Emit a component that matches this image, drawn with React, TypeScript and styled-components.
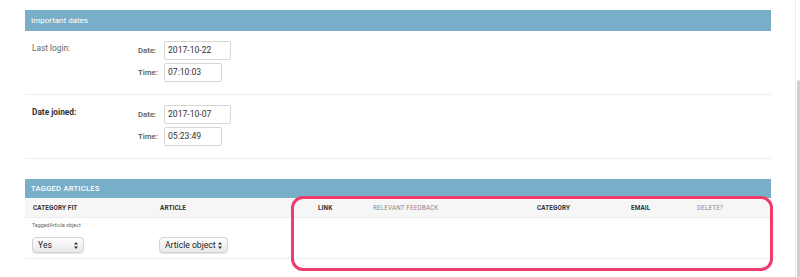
import React from "react";
import styled, { createGlobalStyle } from "styled-components";

const Global = createGlobalStyle`
  html, body { margin: 0; padding: 0; background: #fff; }
  body { font-family: Roboto, "Liberation Sans", Arial, sans-serif; color: #333; }
  * { box-sizing: border-box; }
`;

const Page = styled.div`
  display: flex;
  width: 800px;
  height: 277px;
  overflow: hidden;
`;

const Main = styled.main`
  width: 771px;
  padding: 10px 0 0 25px;
`;

const Scrollbar = styled.div`
  margin-left: 24px;
  width: 5px;
  border-left: 1px solid #ececec;
  display: flex;
  flex-direction: column;
`;

const Thumb = styled.div`
  margin-top: 80px;
  margin-left: 1px;
  width: 3px;
  flex: 1;
  background: #cfcfcf;
  border-radius: 2px;
`;

const Fieldset = styled.section`
  position: relative;
  margin: 0;
`;

const SectionTitle = styled.h2<{ $upper?: boolean; $h?: number }>`
  margin: 0;
  height: ${(p) => p.$h ?? 21}px;
  line-height: ${(p) => p.$h ?? 21}px;
  padding-left: 6px;
  background: #79aec8;
  color: #fff;
  font-size: ${(p) => (p.$upper ? "7.5px" : "8px")};
  font-weight: ${(p) => (p.$upper ? 500 : 400)};
  letter-spacing: ${(p) => (p.$upper ? "0.3px" : "0")};
  text-transform: ${(p) => (p.$upper ? "uppercase" : "none")};
`;

const FormRow = styled.div`
  display: flex;
  padding: 10px 0 12px;
  border-bottom: 1px solid #eee;
`;

const RowLabel = styled.label<{ $bold?: boolean }>`
  width: 113px;
  padding: 2px 0 0 7px;
  font-size: 8.3px;
  line-height: 10px;
  color: ${(p) => (p.$bold ? "#333" : "#666")};
  font-weight: ${(p) => (p.$bold ? 700 : 400)};
`;

const DateTime = styled.div`
  display: flex;
  flex-direction: column;
  gap: 3px;
`;

const DTLine = styled.div`
  display: flex;
  align-items: center;
  gap: 5px;
`;

const DTLabel = styled.span`
  font-size: 7.8px;
  font-weight: 600;
  color: #5f5f5f;
  width: 21px;
`;

const TextInput = styled.div<{ $w: number }>`
  width: ${(p) => p.$w}px;
  height: 19px;
  border: 1px solid #d6d6d6;
  border-radius: 2px;
  padding-left: 3px;
  font-size: 8.6px;
  line-height: 17px;
  color: #333;
  background: #fff;
`;

const TaggedSection = styled(Fieldset)`
  margin-top: 20px;
`;

const Grid = styled.div`
  display: grid;
  grid-template-columns: 127px 158px 55px 164px 94px 66px 1fr;
`;

const HeadRow = styled(Grid)`
  height: 20px;
  background: #f6f6f6;
  border-bottom: 1px solid #eee;
  align-items: center;
`;

const HeadCell = styled.div<{ $muted?: boolean }>`
  padding-left: 8px;
  font-size: 6.4px;
  text-transform: uppercase;
  font-weight: ${(p) => (p.$muted ? 400 : 700)};
  color: ${(p) => (p.$muted ? "#8a8a8a" : "#333")};
  letter-spacing: 0.1px;
`;

const DataRow = styled(Grid)`
  border-bottom: 1px solid #eee;
  height: 41px;
`;

const DataCell = styled.div`
  padding: 4px 0 5px 7px;
  display: flex;
  flex-direction: column;
  justify-content: flex-end;
`;

const Original = styled.p`
  margin: 0 0 auto;
  font-size: 5.3px;
  line-height: 7px;
  color: #666;
`;

const Select = styled.div<{ $w: number }>`
  width: ${(p) => p.$w}px;
  height: 16px;
  display: flex;
  align-items: center;
  justify-content: space-between;
  padding: 0 5px 0 5px;
  border: 1px solid #d2d2d2;
  border-radius: 4px;
  background: linear-gradient(#fdfdfd, #e9e9e9);
  box-shadow: 0 1px 1px rgba(0, 0, 0, 0.1);
  font-size: 8.6px;
  color: #222;
`;

const Highlight = styled.div`
  position: absolute;
  left: 266px;
  top: 17px;
  width: 482px;
  height: 75px;
  border: 3px solid #ef3a6d;
  border-radius: 12px;
  pointer-events: none;
`;

const Arrows = () => (
  <svg width="4" height="7" viewBox="0 0 4 7" aria-hidden>
    <polygon points="2,0 4,2.6 0,2.6" fill="#333" />
    <polygon points="0,4.4 4,4.4 2,7" fill="#333" />
  </svg>
);

const DateTimeField = ({ date, time }: { date: string; time: string }) => (
  <DateTime>
    <DTLine>
      <DTLabel>Date:</DTLabel>
      <TextInput $w={67}>{date}</TextInput>
    </DTLine>
    <DTLine>
      <DTLabel>Time:</DTLabel>
      <TextInput $w={58}>{time}</TextInput>
    </DTLine>
  </DateTime>
);

const headers: { label: string; muted?: boolean }[] = [
  { label: "Category fit" },
  { label: "Article" },
  { label: "Link" },
  { label: "Relevant feedback", muted: true },
  { label: "Category" },
  { label: "Email" },
  { label: "Delete?", muted: true },
];

export default function App() {
  return (
    <>
      <Global />
      <Page>
        <Main>
          <Fieldset>
            <SectionTitle>Important dates</SectionTitle>
            <FormRow>
              <RowLabel>Last login:</RowLabel>
              <DateTimeField date="2017-10-22" time="07:10:03" />
            </FormRow>
            <FormRow>
              <RowLabel $bold>Date joined:</RowLabel>
              <DateTimeField date="2017-10-07" time="05:23:49" />
            </FormRow>
          </Fieldset>
          <TaggedSection>
            <SectionTitle $upper $h={19}>Tagged articles</SectionTitle>
            <HeadRow>
              {headers.map((h) => (
                <HeadCell key={h.label} $muted={h.muted}>
                  {h.label}
                </HeadCell>
              ))}
            </HeadRow>
            <DataRow>
              <DataCell>
                <Original>TaggedArticle object</Original>
                <Select $w={52}>
                  <span>Yes</span>
                  <Arrows />
                </Select>
              </DataCell>
              <DataCell>
                <Select $w={69}>
                  <span>Article object</span>
                  <Arrows />
                </Select>
              </DataCell>
            </DataRow>
            <Highlight />
          </TaggedSection>
        </Main>
        <Scrollbar>
          <Thumb />
        </Scrollbar>
      </Page>
    </>
  );
}
